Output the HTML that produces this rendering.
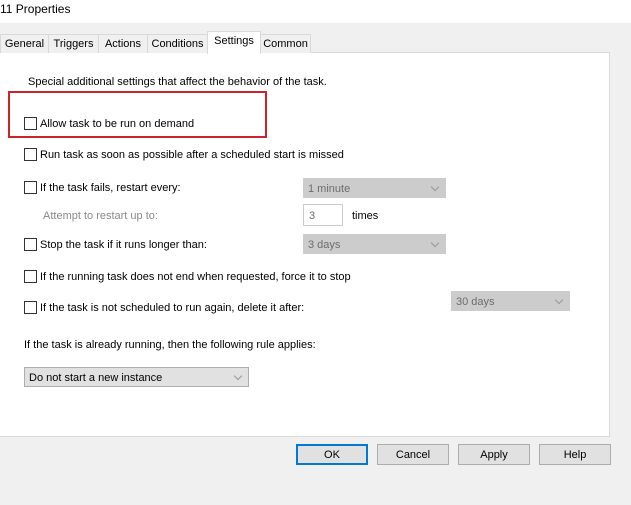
<!DOCTYPE html>
<html><head><meta charset="utf-8"><style>
body{margin:0;width:631px;height:505px;background:#f0f0f0;font-family:"Liberation Sans",sans-serif;font-size:11px;color:#000;position:relative;overflow:hidden}
.a{position:absolute;white-space:nowrap}
.title{left:0;top:0;width:631px;height:23px;background:#fff}
.tab{position:absolute;top:34px;height:18px;border:1px solid #d9d9d9;border-bottom:none;background:#f0f0f0;line-height:18px;text-align:center}
.panel{position:absolute;left:0;top:52px;width:609px;height:383px;background:#fff;border:1px solid #d9d9d9;border-left:none}
.cb{position:absolute;width:11px;height:11px;border:1px solid #333;background:#fff}
.dd{position:absolute;height:20px;background:#ccc;border:1px solid #ccc;color:#6d6d6d;line-height:20px;padding-left:4px;box-sizing:border-box}
.dd:after{content:"";position:absolute;right:7px;top:5px;width:5px;height:5px;border-right:1px solid #999;border-bottom:1px solid #999;transform:rotate(45deg)}
.btn{position:absolute;top:444px;width:72px;height:21px;box-sizing:border-box;border:1px solid #adadad;background:#e1e1e1;text-align:center;line-height:20px}
</style></head><body>
<div class="a title"></div>
<div class="a" style="left:0;top:2px;font-size:12px">11 Properties</div>
<div class="panel"></div>
<div class="tab" style="left:0;width:47px">General</div>
<div class="tab" style="left:48px;width:49px">Triggers</div>
<div class="tab" style="left:98px;width:48px">Actions</div>
<div class="tab" style="left:147px;width:59px">Conditions</div>
<div class="tab" style="left:207px;top:31px;height:22px;width:52px;background:#fff;line-height:19px">Settings</div>
<div class="tab" style="left:260px;width:49px">Common</div>

<div class="a" style="left:28px;top:76px">Special additional settings that affect the behavior of the task.</div>
<div class="a" style="left:8px;top:91px;width:255px;height:43px;border:2px solid #d0222b"></div>

<div class="cb" style="left:24px;top:117px"></div><div class="a" style="left:40px;top:118px">Allow task to be run on demand</div>
<div class="cb" style="left:24px;top:148px"></div><div class="a" style="left:40px;top:149px">Run task as soon as possible after a scheduled start is missed</div>
<div class="cb" style="left:24px;top:181px"></div><div class="a" style="left:40px;top:182px">If the task fails, restart every:</div>
<div class="dd" style="left:303px;top:178px;width:143px">1 minute</div>
<div class="a" style="left:43px;top:210px;color:#8a8a8a">Attempt to restart up to:</div>
<div class="a" style="left:303px;top:204px;width:40px;height:22px;border:1px solid #ccc;background:#fff;color:#6d6d6d;line-height:22px;text-indent:5px;box-sizing:border-box">3</div>
<div class="a" style="left:352px;top:210px">times</div>
<div class="cb" style="left:24px;top:238px"></div><div class="a" style="left:40px;top:239px">Stop the task if it runs longer than:</div>
<div class="dd" style="left:303px;top:234px;width:143px">3 days</div>
<div class="cb" style="left:24px;top:270px"></div><div class="a" style="left:40px;top:271px">If the running task does not end when requested, force it to stop</div>
<div class="cb" style="left:24px;top:301px"></div><div class="a" style="left:40px;top:302px">If the task is not scheduled to run again, delete it after:</div>
<div class="dd" style="left:451px;top:291px;width:119px">30 days</div>
<div class="a" style="left:24px;top:339px">If the task is already running, then the following rule applies:</div>
<div class="dd" style="left:24px;top:367px;width:225px;background:#e1e1e1;border-color:#adadad;color:#000">Do not start a new instance</div>

<div class="btn" style="left:296px;border:2px solid #0078d7;line-height:18px">OK</div>
<div class="btn" style="left:377px">Cancel</div>
<div class="btn" style="left:458px">Apply</div>
<div class="btn" style="left:539px">Help</div>
</body></html>
